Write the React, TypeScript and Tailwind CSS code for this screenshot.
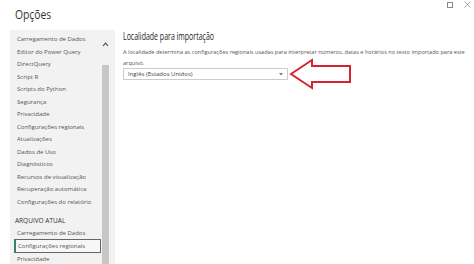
import React from "react";

const items = [
  "Carregamento de Dados",
  "Editor do Power Query",
  "DirectQuery",
  "Script R",
  "Scripts do Python",
  "Segurança",
  "Privacidade",
  "Configurações regionais",
  "Atualizações",
  "Dados de Uso",
  "Diagnósticos",
  "Recursos de visualização",
  "Recuperação automática",
  "Configurações do relatório",
];

export default function App() {
  return (
    <div
      className="relative w-[474px] h-[264px] overflow-hidden bg-white text-[#323130]"
      style={{ fontFamily: '"Open Sans", "Noto Sans", sans-serif' }}
    >
      {/* window buttons */}
      <div className="absolute top-[1px] right-[3px] flex items-center gap-[11px] text-[#777]">
        <div className="w-[6px] h-[6px] border border-[#888]" />
        <svg width="7" height="7" viewBox="0 0 7 7">
          <path d="M0.5 0.5 L6.5 6.5 M6.5 0.5 L0.5 6.5" stroke="#888" strokeWidth="0.8" />
        </svg>
      </div>

      <div className="pl-[15px] pt-[7px] h-[30px] text-[12px] leading-[16px] text-[#333]">
        <span className="inline-block origin-left scale-x-[0.86]">Opções</span>
      </div>

      <div className="flex h-[234px]">
        {/* sidebar */}
        <div className="ml-[10px] w-[105px] h-full bg-[#f2f2f2] flex">
          <div className="flex-1 pt-[3px] pl-[4px] pr-[1px] text-[6px] text-[#555]">
            {items.map((t) => (
              <div key={t} className="h-[12.5px] pl-[3px] leading-[12.5px] whitespace-nowrap">
                {t}
              </div>
            ))}
            <div className="h-[6px]" />
            <div className="h-[13px] leading-[13px] pl-[1px] text-[6.5px] text-[#333]">ARQUIVO ATUAL</div>
            <div className="h-[12px] pl-[3px] leading-[12px] whitespace-nowrap">Carregamento de Dados</div>
            <div className="h-[14px] pl-[2px] leading-[12px] whitespace-nowrap border border-[#666] border-l-[2px] border-l-[#3b7f6f] bg-[#f7f7f7]">
              Configurações regionais
            </div>
            <div className="h-[12.5px] pl-[3px] leading-[12.5px] whitespace-nowrap">Privacidade</div>
          </div>
          <div className="w-[13px] h-full flex flex-col items-center pr-[6px]">
            <svg width="7" height="5" viewBox="0 0 7 5" className="mt-[12px]">
              <path d="M1 4 L3.5 1.2 L6 4" fill="none" stroke="#444" strokeWidth="1.1" />
            </svg>
            <div className="mt-[18px] w-[7px] flex-1 bg-[#c6c6c6]" />
          </div>
        </div>

        {/* content */}
        <div className="pl-[8px] flex-1 relative">
          <div className="text-[10px] leading-[12px] text-[#222] whitespace-nowrap">
            <span className="inline-block origin-left scale-x-[0.7]">Localidade para importação</span>
          </div>
          <div className="mt-[5px] text-[5.6px] leading-[11px] text-[#555] whitespace-nowrap">
            A localidade determina as configurações regionais usadas para interpretar números, datas e horários no texto importado para este
            <br />
            arquivo.
          </div>
          <div className="mt-[-1px] w-[165px] h-[12px] border border-[#ccc] bg-white flex items-center justify-between pl-[4px] pr-[4px] text-[6px] text-[#444]">
            <span>Inglês (Estados Unidos)</span>
            <svg width="4" height="3" viewBox="0 0 4 3">
              <path d="M0 0 L4 0 L2 2.5 Z" fill="#777" />
            </svg>
          </div>

          {/* red arrow annotation */}
          <svg
            className="absolute left-[173px] top-[27px]"
            width="66"
            height="34"
            viewBox="0 0 66 34"
          >
            <path
              d="M3 17 L24 3 L24 9 L62 9 L62 25 L24 25 L24 31 Z"
              fill="white"
              stroke="#d7232f"
              strokeWidth="2"
              strokeLinejoin="miter"
            />
          </svg>
        </div>
      </div>
    </div>
  );
}
